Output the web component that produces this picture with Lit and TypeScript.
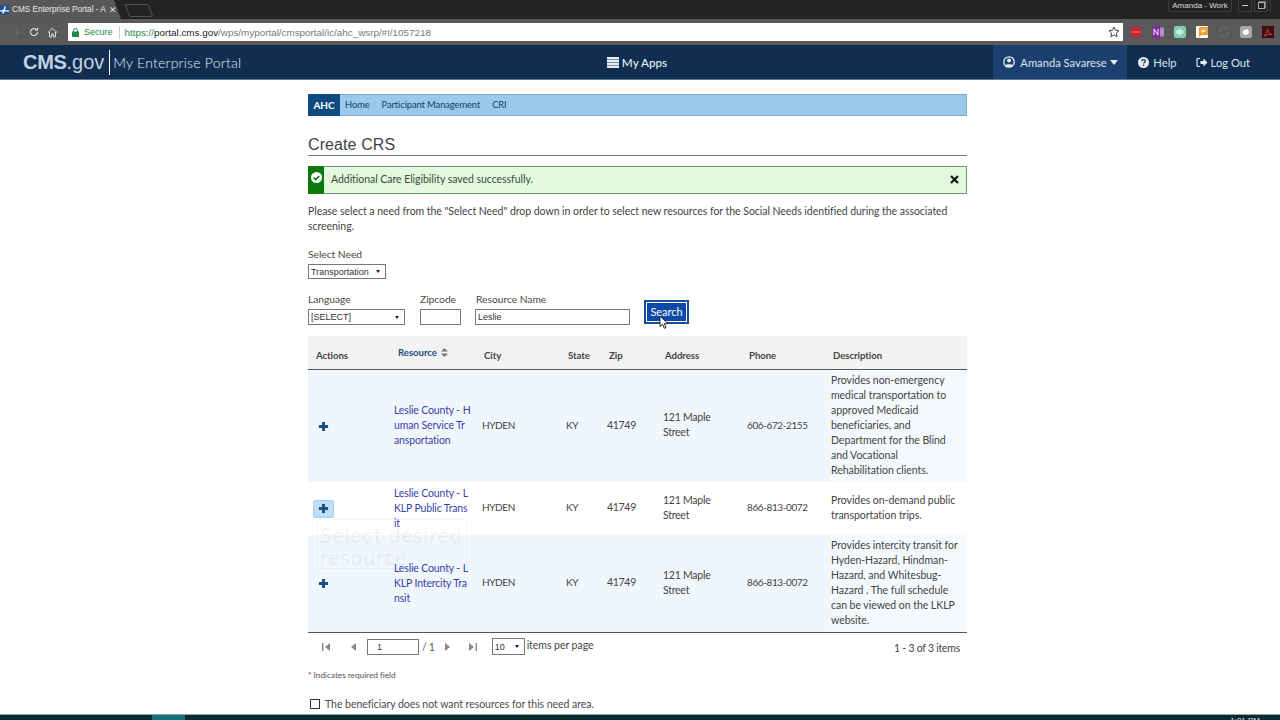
import { LitElement, html, css } from "lit";
import { customElement } from "lit/decorators.js";

const plus = html`<svg class="plus" viewBox="0 0 12 12"><path d="M4.4 1h3.2v3.4H11v3.2H7.6V11H4.4V7.6H1V4.4h3.4z"/></svg>`;

const rows = [
  {
    link: ["Leslie County - H", "uman Service Tr", "ansportation"],
    phone: "606-672-2155",
    desc: ["Provides non-emergency", "medical transportation to", "approved Medicaid", "beneficiaries, and", "Department for the Blind", "and Vocational", "Rehabilitation clients."],
    h: 112, cls: "odd",
  },
  {
    link: ["Leslie County - L", "KLP Public Trans", "it"],
    phone: "866-813-0072",
    desc: ["Provides on-demand public", "transportation trips."],
    h: 53, cls: "even", active: true, nudge: "low",
  },
  {
    link: ["Leslie County - L", "KLP Intercity Tra", "nsit"],
    phone: "866-813-0072",
    desc: ["Provides intercity transit for", "Hyden-Hazard, Hindman-", "Hazard, and Whitesbug-", "Hazard . The full schedule", "can be viewed on the LKLP", "website."],
    h: 97, cls: "odd", nudge: "low",
  },
];

const lines = (a: string[]) => a.map((l, i) => html`${i ? html`<br />` : ""}${l}`);

@customElement("app-root")
export class AppRoot extends LitElement {
  static styles = css`
    :host { display: block; width: 1280px; height: 720px; overflow: hidden; background: #fff; font-family: "Lato", "Liberation Sans", sans-serif; font-size: 10.5px; letter-spacing: -0.04px; color: #444; }
    .page { display: flex; flex-direction: column; height: 720px; position: relative; overflow: hidden; }
    svg { display: block; flex: none; }

    .tabbar { height: 19px; background: #232323; display: flex; align-items: stretch; flex: none; position: relative; letter-spacing: 0; }
    .tab { width: 121px; background: #585858; display: flex; align-items: center; color: #e8e8e8; font: 8.2px "Liberation Sans", sans-serif; clip-path: polygon(0 0, 114px 0, 100% 100%, 0 100%); }
    .tab .fav { width: 9px; height: 10px; margin-right: 3px; }
    .tab .x { color: #ddd; font-size: 9px; margin-left: auto; margin-right: 4px; }
    .newtab { width: 22px; height: 11px; margin: 4px 0 0 6px; border: 1px solid #555; border-radius: 2px; transform: skewX(20deg); }
    .winbar { margin-left: auto; display: flex; align-items: flex-start; }
    .profile { box-sizing: border-box; height: 12px; width: 64px; margin-right: 6px; border: 1px solid #3d3d3d; border-top: 0; border-radius: 0 0 3px 3px; color: #ddd; font: 8px/11px "Liberation Sans", sans-serif; text-align: center; }
    .wbtn { box-sizing: border-box; width: 14px; height: 12px; margin-right: 2px; border: 1px solid #3d3d3d; border-top: 0; display: flex; align-items: center; justify-content: center; }
    .wbtn i { display: block; width: 6px; height: 1px; background: #ccc; }
    .wbtn b { display: block; width: 5px; height: 5px; border: 1px solid #aaa; box-shadow: 1px -1px 0 #777; }
    .wend { box-sizing: border-box; width: 10px; height: 12px; border-left: 1px solid #3d3d3d; }

    .toolbar { height: 26px; flex: none; background: #595959; display: flex; align-items: flex-start; padding-top: 4px; box-sizing: border-box; letter-spacing: 0; }
    .navs { width: 68px; display: flex; align-items: center; height: 18px; gap: 8px; }
    .navs .back { margin-left: -7px; }
    .omni { width: 1055px; height: 18px; background: #fff; display: flex; align-items: center; font: 9px "Liberation Sans", sans-serif; color: #777; }
    .lock { width: 7px; height: 9px; margin: 0 5px 0 4px; }
    .secure { color: #1e8a4a; }
    .sep { width: 1px; height: 13px; background: #ccc; margin: 0 5px 0 6px; }
    .url { font-size: 9.85px; }
    .https { color: #1e8a4a; }
    .host { color: #222; }
    .star { margin-left: auto; margin-right: 3px; width: 12px; height: 12px; }
    .exts { display: flex; gap: 10px; padding-left: 7px; align-items: center; height: 18px; }
    .ext { width: 12px; height: 12px; }

    .hdr { height: 35px; flex: none; background: #112e51; border-bottom: 1px solid #5b7a96; box-sizing: border-box; display: grid; grid-template-columns: 1fr auto 1fr; align-items: stretch; color: #dbe4ee; letter-spacing: 0; }
    .brand { display: flex; align-items: center; padding-left: 23px; }
    .cms { font: bold 20px "Liberation Sans", sans-serif; color: #c3d2e2; letter-spacing: -0.3px; }
    .gov { font: 20px "Liberation Sans", sans-serif; color: #c3d2e2; letter-spacing: 0; }
    .vbar { width: 1px; height: 25px; background: #fff; margin: 0 3px 0 5px; }
    .portal { font: 300 14px "Lato", sans-serif; color: #e3eaf2; letter-spacing: 0.22px; }
    .apps { display: flex; align-items: center; gap: 3px; font-size: 11.7px; color: #e6edf4; font-weight: 500; margin-right: 6px; }
    .hright { display: flex; justify-content: flex-end; align-items: stretch; padding-right: 19px; }
    .hitem { display: flex; align-items: center; gap: 4px; font-size: 11.2px; padding: 0 9px 0 11px; color: #dbe4ee; white-space: nowrap; }
    .hitem.user { background: #1b3f6e; padding: 0 0 0 10px; width: 134px; box-sizing: border-box; gap: 5px; }
    .hitem.log { padding: 0 11px 0 10px; gap: 3px; }
    .caret { width: 0; height: 0; border: 4.5px solid transparent; border-top: 5px solid #e6edf4; border-bottom: 0; margin-left: -2px; }

    .main { flex: 1; min-height: 0; width: 659px; margin-left: 308px; padding-top: 14px; display: flex; flex-direction: column; position: relative; }
    .nav { height: 22px; flex: none; box-sizing: border-box; background: #9bc9e9; border: 1px solid #82abcb; border-left: 0; display: flex; align-items: center; font-size: 9.4px; letter-spacing: -0.1px; color: #173e68; gap: 12px; padding-bottom: 1px; }
    .nav .on { background: #0f4a80; color: #fff; font-weight: 700; align-self: stretch; width: 32px; display: flex; align-items: center; justify-content: center; margin: -1px -7px -2px 0; font-size: 10px; padding: 0 0 1px; }
    h1 { margin: 19px 0 0; height: 20px; font: 16px/19px "Liberation Sans", sans-serif; color: #3f4448; border-bottom: 1px solid #6f7680; flex: none; letter-spacing: 0.1px; }
    .alert { margin-top: 10px; height: 28px; flex: none; box-sizing: border-box; background: #e3f9dd; border: 1px solid #6a9a6a; border-left: 0; display: flex; align-items: center; color: #3e4a3e; position: relative; }
    .alert .ok { width: 16px; align-self: stretch; background: #0a7a0a; margin: -1px 0; padding-top: 6px; display: flex; justify-content: center; box-sizing: content-box; height: 22px; }
    .alert .msg { margin: -3px 0 0 7px; }
    .alert .close { margin-left: auto; margin-right: 7px; width: 9px; height: 9px; margin-top: -2px; }
    p { margin: 10px 0 0; line-height: 15px; width: 650px; flex: none; }
    .lab { font-size: 10.3px; line-height: 13px; color: #4a4a4a; }
    .need { margin-top: 14px; display: flex; flex-direction: column; gap: 3px; flex: none; }
    .sel { box-sizing: border-box; border: 1px solid #777; background: #fff; display: flex; align-items: center; justify-content: space-between; font: 9px "Liberation Sans", sans-serif; letter-spacing: 0; color: #333; padding: 0 5px 0 2px; }
    .sel::after { content: ""; border: 2.5px solid transparent; border-top: 3px solid #222; border-bottom: 0; }
    .filters { margin-top: 12px; display: flex; align-items: flex-end; flex: none; height: 34px; position: relative; }
    .fld { display: flex; flex-direction: column; gap: 3px; }
    .inp { box-sizing: border-box; border: 1px solid #777; height: 16px; background: #fff; font: 9px/14px "Liberation Sans", sans-serif; letter-spacing: 0; padding-left: 2px; color: #333; }
    .search { margin-left: 14px; margin-bottom: 1px; width: 45px; height: 24px; box-sizing: border-box; background: #0b4aa6; border: 2px solid #1a4e9c; outline: 1px solid #fff; outline-offset: -3px; color: #fff; font-size: 11px; display: flex; align-items: center; justify-content: center; padding-bottom: 2px; }

    .tbl { margin-top: 11px; flex: none; display: grid; grid-template-columns: 86px 88px 84px 41px 56px 84px 84px 1fr; position: relative; }
    .th { height: 34px; background: #f2f2f2; border-bottom: 1px solid #555; display: flex; align-items: center; font-weight: 700; font-size: 9.6px; color: #444; padding-left: 2px; box-sizing: border-box; padding-top: 6px; }
    .th.first { padding-left: 8px; }
    .th.res { color: #1f4a85; align-items: flex-start; padding-top: 11px; padding-left: 4px; gap: 4px; }
    .sort { width: 7px; height: 9px; margin-top: 1px; }
    .td { display: flex; align-items: center; line-height: 15px; color: #444; box-sizing: border-box; padding-bottom: 2px; }
    .td.low { padding-bottom: 0; }
    .odd { background: #f0f7fc; }
    .even { background: #fff; }
    .td.act { padding: 0 0 0 5px; }
    .btn { width: 21px; height: 18px; box-sizing: border-box; display: flex; align-items: center; justify-content: center; border-radius: 2px; }
    .btn.on { background: #bfdef7; border: 1px solid #a6cdec; }
    .plus { width: 11px; height: 11px; fill: #1c4f80; }
    .td a { color: #3b3fa8; letter-spacing: -0.15px; }
    .td.city { font-size: 10px; letter-spacing: -0.4px; }
    .td.zip { letter-spacing: -0.3px; }
    .td.addr { letter-spacing: -0.25px; }
    .td.phone { font-size: 10px; letter-spacing: -0.4px; }
    .td.desc { background-color: #f4f9fd; }
    .td.desc.even { background: #fff; }
    .endline { grid-column: 1 / -1; height: 1px; background: #555; }
    .ghost { position: absolute; left: 9px; top: 183px; width: 150px; height: 50px; box-sizing: border-box; border: 1px solid rgba(0,0,0,.03); color: rgba(60,60,60,.07); font-size: 21px; letter-spacing: 1px; line-height: 22px; padding: 4px 2px 0; }

    .pager { height: 27px; flex: none; display: flex; align-items: center; position: relative; }
    .pg { width: 10px; height: 8px; fill: #888; }
    .pager .inp { height: 16px; width: 52px; margin-left: 9px; padding-left: 9px; }
    .of { margin-left: 3px; color: #555; letter-spacing: -0.3px; }
    .pager .sel { width: 33px; height: 17px; }
    .items { color: #444; margin-left: 2px; margin-top: -4px; }
    .count { margin-left: auto; margin-right: 7px; margin-top: 2px; color: #444; letter-spacing: -0.25px; }
    .req { margin-top: 10px; font-size: 8.3px; color: #555; line-height: 11px; flex: none; }
    .req span { color: #c22; }
    .chk { margin-top: 17px; display: flex; align-items: center; gap: 5px; flex: none; line-height: 12px; padding-left: 2px; color: #4a4a4a; }
    .box { width: 10px; height: 10px; box-sizing: border-box; border: 1px solid #333; }

    .task { height: 5px; flex: none; background: #0b2b33; border-top: 1px solid #8ea2a8; box-sizing: content-box; display: flex; overflow: hidden; letter-spacing: 0; }
    .task .act { margin-left: 152px; width: 33px; background: #12707a; }
    .task .clock { margin-left: auto; margin-right: 20px; color: #dfe8ea; font: 8px/12px "Liberation Sans", sans-serif; }
    .cursor { position: absolute; left: 659px; top: 315px; width: 10px; height: 15px; }
  `;

  render() {
    return html`<div class="page">
      <div class="tabbar">
        <div class="tab">
          <svg class="fav" viewBox="0 0 10 10"><rect x="0" width="10" height="10" fill="#1d4f96"/><path d="M0 6h10M6 1L3 9" stroke="#fff" stroke-width="1.6"/></svg>
          <span>CMS Enterprise Portal - A</span><span class="x">✕</span>
        </div>
        <div class="newtab"></div>
        <div class="winbar">
          <div class="profile">Amanda - Work</div>
          <div class="wbtn"><i></i></div>
          <div class="wbtn"><b></b></div>
          <div class="wend"></div>
        </div>
      </div>
      <div class="toolbar">
        <div class="navs">
          <svg class="back" width="10" height="10" viewBox="0 0 10 10"><path d="M9 5H2M5 2L2 5l3 3" fill="none" stroke="#6e6e6e" stroke-width="1.2"/></svg>
          <svg width="10" height="10" viewBox="0 0 10 10"><path d="M1 5h7M5 2l3 3-3 3" fill="none" stroke="#6e6e6e" stroke-width="1.2"/></svg>
          <svg width="10" height="10" viewBox="0 0 10 10"><path d="M8.5 5A3.5 3.5 0 1 1 7.4 2.5M8.5 0.8v2.4H6.1" fill="none" stroke="#ddd" stroke-width="1.1"/></svg>
          <svg width="11" height="11" viewBox="0 0 11 11"><path d="M1 5.5L5.5 1.2 10 5.5M2.5 5v5h2.2V7h1.6v3h2.2V5" fill="none" stroke="#ddd" stroke-width="1"/></svg>
        </div>
        <div class="omni">
          <svg class="lock" viewBox="0 0 7 9"><rect y="3.5" width="7" height="5.5" fill="#1e8a4a"/><path d="M1.5 4V2.5a2 2 0 0 1 4 0V4" fill="none" stroke="#1e8a4a"/></svg>
          <span class="secure">Secure</span><span class="sep"></span>
          <span class="url"><span class="https">https://</span><span class="host">portal.cms.gov</span>/wps/myportal/cmsportal/ic/ahc_wsrp/#!/1057218</span>
          <svg class="star" viewBox="0 0 12 12"><path d="M6 1l1.5 3.3 3.5.4-2.6 2.4.7 3.6L6 8.9l-3.1 1.8.7-3.6L1 4.7l3.5-.4z" fill="none" stroke="#444"/></svg>
        </div>
        <div class="exts">
          <svg class="ext" viewBox="0 0 12 12"><circle cx="6" cy="6" r="5.5" fill="#c8242c"/><path d="M2.5 6h1.2M5.4 6h1.2M8.3 6h1.2" stroke="#fff" stroke-width="1.2"/></svg>
          <svg class="ext" viewBox="0 0 12 12"><rect width="8" height="12" fill="#7d2fa0"/><rect x="8" y="1.5" width="4" height="9" fill="#b98ad0"/><path d="M2 9V3l4 6V3" fill="none" stroke="#fff" stroke-width=".9"/></svg>
          <svg class="ext" viewBox="0 0 12 12"><rect width="12" height="12" rx="2" fill="#7ed0ae"/><path d="M1.5 6h1.5M3.5 4v4M5 2.5v7M6.5 3.5v5M8 4.5v3M9.5 5.5v1" stroke="#fff" stroke-width=".9"/></svg>
          <svg class="ext" viewBox="0 0 12 12"><rect width="12" height="12" rx="1" fill="#fff"/><path d="M3 1h9v8H5L3 12z" fill="#f0a030"/><path d="M6 3.5v2.5h1.5V3.5M9 3.5V6" stroke="#fff" stroke-width=".9" fill="none"/></svg>
          <svg class="ext" viewBox="0 0 12 12"><path d="M2 6a4 4 0 0 1 7-2.6M10 6a4 4 0 0 1-7 2.6" fill="none" stroke="#676767" stroke-width="1.5"/></svg>
          <svg class="ext" viewBox="0 0 12 12"><rect width="12" height="12" rx="2" fill="#a8a8a8"/><path d="M3 4.5L8 3l1 4-3 2-3-1z" fill="#fff"/></svg>
          <svg class="ext" viewBox="0 0 12 12"><rect width="12" height="12" fill="#3a0f0f"/><path d="M2 10c2-1 3-4 3.4-7 .6 3 2 5 4.6 5.4-2.4-.2-5.4.4-8 1.6z" fill="none" stroke="#e04040" stroke-width=".9"/></svg>
        </div>
      </div>
      <div class="hdr">
        <div class="brand"><span class="cms">CMS</span><span class="gov">.gov</span><span class="vbar"></span><span class="portal">My Enterprise Portal</span></div>
        <div class="apps">
          <svg width="12" height="11" viewBox="0 0 12 11"><path d="M0 0h12v2.5H0zM0 3h12v2.2H0zM0 5.8h12V8H0zM0 8.5h12V11H0z" fill="#e6edf4"/></svg>
          My Apps
        </div>
        <div class="hright">
          <div class="hitem user">
            <svg width="12" height="12" viewBox="0 0 12 12"><circle cx="6" cy="6" r="5.2" fill="none" stroke="#e6edf4" stroke-width="1.3"/><circle cx="6" cy="4.6" r="2" fill="#e6edf4"/><path d="M2.4 9.6C3 7.8 9 7.8 9.6 9.6 8 11.4 4 11.4 2.4 9.6z" fill="#e6edf4"/></svg>
            Amanda Savarese<span class="caret"></span>
          </div>
          <div class="hitem">
            <svg width="11" height="11" viewBox="0 0 11 11"><circle cx="5.5" cy="5.5" r="5.5" fill="#e6edf4"/><path d="M3.8 4.2c0-2.2 3.5-2.2 3.5 0 0 1.3-1.7 1.2-1.7 2.4" fill="none" stroke="#112e51" stroke-width="1.2"/><rect x="4.9" y="7.6" width="1.3" height="1.3" fill="#112e51"/></svg>
            Help
          </div>
          <div class="hitem log">
            <svg width="12" height="11" viewBox="0 0 12 11"><path d="M4 1.5H2A1 1 0 0 0 1 2.5v6a1 1 0 0 0 1 1h2" fill="none" stroke="#e6edf4" stroke-width="1.2"/><path d="M4.5 4h3V1.5L11.5 5.5l-4 4V7h-3z" fill="#e6edf4"/></svg>
            Log Out
          </div>
        </div>
      </div>

      <div class="main">
        <div class="nav"><span class="on">AHC</span><span>Home</span><span>Participant Management</span><span>CRI</span></div>
        <h1>Create CRS</h1>
        <div class="alert">
          <div class="ok"><svg width="11" height="11" viewBox="0 0 11 11"><circle cx="5.5" cy="5.5" r="5.5" fill="#fff"/><path d="M2.8 5.6l2 2 3.4-3.6" fill="none" stroke="#0a7a0a" stroke-width="1.6"/></svg></div>
          <span class="msg">Additional Care Eligibility saved successfully.</span>
          <svg class="close" viewBox="0 0 9 9"><path d="M1 1l7 7M8 1L1 8" stroke="#111" stroke-width="2.2"/></svg>
        </div>
        <p>Please select a need from the "Select Need" drop down in order to select new resources for the Social Needs identified during the associated screening.</p>
        <div class="need">
          <span class="lab">Select Need</span>
          <div class="sel" style="width:78px;height:15px">Transportation</div>
        </div>
        <div class="filters">
          <div class="fld" style="width:97px"><span class="lab">Language</span><div class="sel" style="height:16px">[SELECT]</div></div>
          <div class="fld" style="width:41px;margin-left:15px"><span class="lab">Zipcode</span><div class="inp"></div></div>
          <div class="fld" style="width:155px;margin-left:14px"><span class="lab" style="margin-left:1px">Resource Name</span><div class="inp">Leslie</div></div>
          <div class="search">Search</div>
        </div>
        <div class="tbl">
          <div class="th first">Actions</div>
          <div class="th res">Resource <svg class="sort" viewBox="0 0 7 9"><path d="M3.5 0L7 3.6H0zM3.5 9L0 5.4h7z" fill="#777"/></svg></div>
          <div class="th">City</div><div class="th">State</div><div class="th">Zip</div><div class="th">Address</div><div class="th">Phone</div><div class="th">Description</div>
          ${rows.map((r) => html`
            <div class="td act ${r.cls}" style="height:${r.h}px"><span class="btn ${r.active ? "on" : ""}">${plus}</span></div>
            <div class="td ${r.cls} ${r.nudge ?? ""}"><a>${lines(r.link)}</a></div>
            <div class="td city ${r.cls}">HYDEN</div>
            <div class="td city ${r.cls}">KY</div>
            <div class="td zip ${r.cls}">41749</div>
            <div class="td addr ${r.cls}"><span>121 Maple<br />Street</span></div>
            <div class="td phone ${r.cls}">${r.phone}</div>
            <div class="td desc ${r.cls}"><span>${lines(r.desc)}</span></div>
          `)}
          <div class="endline"></div>
          <div class="ghost">Select desired resource</div>
        </div>
        <div class="pager">
          <svg class="pg" style="margin-left:13px" viewBox="0 0 10 8"><path d="M1 0h1.4v8H1zM9 0v8L4 4z"/></svg>
          <svg class="pg" style="margin-left:17px" viewBox="0 0 10 8"><path d="M8 0v8L3 4z"/></svg>
          <div class="inp">1</div><span class="of">/ 1</span>
          <svg class="pg" style="margin-left:8px" viewBox="0 0 10 8"><path d="M2 0v8l5-4z"/></svg>
          <svg class="pg" style="margin-left:15px" viewBox="0 0 10 8"><path d="M1 0v8l5-4zM7.6 0H9v8H7.6z"/></svg>
          <div class="sel" style="margin-left:14px">10</div>
          <span class="items">items per page</span>
          <span class="count">1 - 3 of 3 items</span>
        </div>
        <div class="req"><span>*</span> Indicates required field</div>
        <div class="chk"><span class="box"></span>The beneficiary does not want resources for this need area.</div>
      </div>

      <div class="task"><div class="act"></div><span class="clock">1:01 PM</span></div>
      <svg class="cursor" viewBox="0 0 10 15"><path d="M1 1v10.5l2.6-2.2 1.7 4 1.7-.8-1.7-3.8H9z" fill="#fff" stroke="#111" stroke-width=".9"/></svg>
    </div>`;
  }
}
